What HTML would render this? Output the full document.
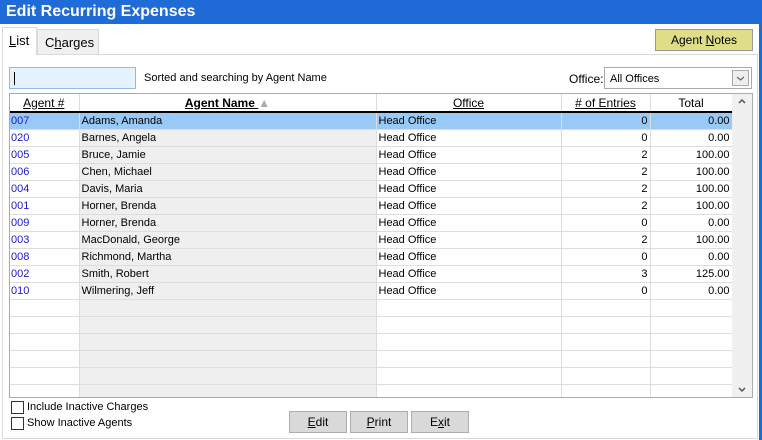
<!DOCTYPE html><html><head><style>
*{margin:0;padding:0;box-sizing:border-box}
body{width:762px;height:440px;background:#fff;font-family:"Liberation Sans",sans-serif;font-size:11px;color:#000;position:relative;overflow:hidden}
.a{position:absolute}
.title{left:0;top:0;width:762px;height:24px;background:#1f6bd8;color:#fff;font-weight:bold;font-size:16px;line-height:24px;padding-left:6px}
.rb{left:759px;top:24px;width:3px;height:416px;background:#1f6bd8}
.btn{background:#d9d9d9;border:1px solid #adadad;text-align:center;line-height:20px;font-size:12px}
table{border-collapse:collapse;table-layout:fixed}
td{height:17px;border-right:1px solid #ddd;border-bottom:1px solid #ddd;padding:0 2px;white-space:nowrap;overflow:hidden;font-size:11px}
td.n{color:#1a1acc}
td.g{background:#efefef}
td.r{text-align:right}
tr.sel td{background:#99c9f7}
th{height:18px;font-weight:normal;font-size:12px;border-right:1px solid #ddd;border-bottom:2px solid #000;text-decoration:underline}
.cb{width:13px;height:13px;border:1px solid #333;background:#fff}
</style></head><body>
<div class="a title">Edit Recurring Expenses</div>
<div class="a rb"></div>
<div class="a" style="left:2px;top:54px;width:756px;height:385px;border:1px solid #d9d9d9"></div>
<div class="a" style="left:2px;top:27px;width:35px;height:28px;background:#fff;border:1px solid #d9d9d9;border-bottom:none;font-size:13px;padding:5px 0 0 6px"><u>L</u>ist</div>
<div class="a" style="left:37px;top:29px;width:62px;height:25px;background:#f0f0f0;border:1px solid #d9d9d9;border-bottom:none;font-size:13px;padding:5px 0 0 7px">C<u>h</u>arges</div>
<div class="a btn" style="left:655px;top:29px;width:98px;height:22px;background:#dede88;border-color:#999">Agent <u>N</u>otes</div>
<div class="a" style="left:9px;top:67px;width:127px;height:22px;background:#e6f3fd;border:1px solid #8dbbe8"><div style="position:absolute;left:4px;top:4px;width:1px;height:13px;background:#000"></div></div>
<div class="a" style="left:144px;top:72px">Sorted and searching by Agent Name</div>
<div class="a" style="left:569px;top:72px;font-size:12px">Office:</div>
<div class="a" style="left:604px;top:67px;width:148px;height:22px;border:1px solid #aaa;padding:5px 0 0 5px">All Offices<div style="position:absolute;right:2px;top:2px;width:17px;height:16px;border:1px solid #aaa;background:#eee"><svg width="15" height="14" style="position:absolute;left:0;top:0"><path d="M4 6 L7.5 9 L11 6" stroke="#666" stroke-width="1.2" fill="none"/></svg></div></div>
<div class="a" style="left:9px;top:93px;width:744px;height:305px;border:1px solid #aaa;overflow:hidden">
<table style="width:723px;margin-left:-1px">
<colgroup><col style="width:70px"><col style="width:297px"><col style="width:185px"><col style="width:89px"><col style="width:82px"></colgroup>
<tr><th>Agent #</th><th><b>Agent Name</b> <span style="color:#aaa;text-decoration:none;display:inline-block">&#9650;</span></th><th>Office</th><th>#&nbsp;of Entries</th><th style="text-decoration:none">Total</th></tr>
<tr class="sel"><td class="n">007</td><td>Adams, Amanda</td><td>Head Office</td><td class="r">0</td><td class="r">0.00</td></tr>
<tr><td class="n">020</td><td class="g">Barnes, Angela</td><td>Head Office</td><td class="r">0</td><td class="r">0.00</td></tr>
<tr><td class="n">005</td><td class="g">Bruce, Jamie</td><td>Head Office</td><td class="r">2</td><td class="r">100.00</td></tr>
<tr><td class="n">006</td><td class="g">Chen, Michael</td><td>Head Office</td><td class="r">2</td><td class="r">100.00</td></tr>
<tr><td class="n">004</td><td class="g">Davis, Maria</td><td>Head Office</td><td class="r">2</td><td class="r">100.00</td></tr>
<tr><td class="n">001</td><td class="g">Horner, Brenda</td><td>Head Office</td><td class="r">2</td><td class="r">100.00</td></tr>
<tr><td class="n">009</td><td class="g">Horner, Brenda</td><td>Head Office</td><td class="r">0</td><td class="r">0.00</td></tr>
<tr><td class="n">003</td><td class="g">MacDonald, George</td><td>Head Office</td><td class="r">2</td><td class="r">100.00</td></tr>
<tr><td class="n">008</td><td class="g">Richmond, Martha</td><td>Head Office</td><td class="r">0</td><td class="r">0.00</td></tr>
<tr><td class="n">002</td><td class="g">Smith, Robert</td><td>Head Office</td><td class="r">3</td><td class="r">125.00</td></tr>
<tr><td class="n">010</td><td class="g">Wilmering, Jeff</td><td>Head Office</td><td class="r">0</td><td class="r">0.00</td></tr>
<tr><td></td><td class="g"></td><td></td><td></td><td></td></tr>
<tr><td></td><td class="g"></td><td></td><td></td><td></td></tr>
<tr><td></td><td class="g"></td><td></td><td></td><td></td></tr>
<tr><td></td><td class="g"></td><td></td><td></td><td></td></tr>
<tr><td></td><td class="g"></td><td></td><td></td><td></td></tr>
<tr><td></td><td class="g"></td><td></td><td></td><td></td></tr>
</table>
<div style="position:absolute;left:722px;top:0;width:20px;height:303px;background:#f0f0f0">
<svg width="20" height="14" style="position:absolute;top:0;left:0"><path d="M7 9 L10 6 L13 9" stroke="#555" stroke-width="1.5" fill="none"/></svg>
<svg width="20" height="14" style="position:absolute;bottom:0;left:0"><path d="M7 5 L10 8 L13 5" stroke="#555" stroke-width="1.5" fill="none"/></svg>
</div>
</div>
<div class="a cb" style="left:11px;top:401px"></div><div class="a" style="left:27px;top:401px">Include Inactive Charges</div>
<div class="a cb" style="left:11px;top:417px"></div><div class="a" style="left:27px;top:417px">Show Inactive Agents</div>
<div class="a btn" style="left:289px;top:411px;width:58px;height:22px"><u>E</u>dit</div>
<div class="a btn" style="left:350px;top:411px;width:58px;height:22px"><u>P</u>rint</div>
<div class="a btn" style="left:411px;top:411px;width:58px;height:22px">E<u>x</u>it</div>
</body></html>
